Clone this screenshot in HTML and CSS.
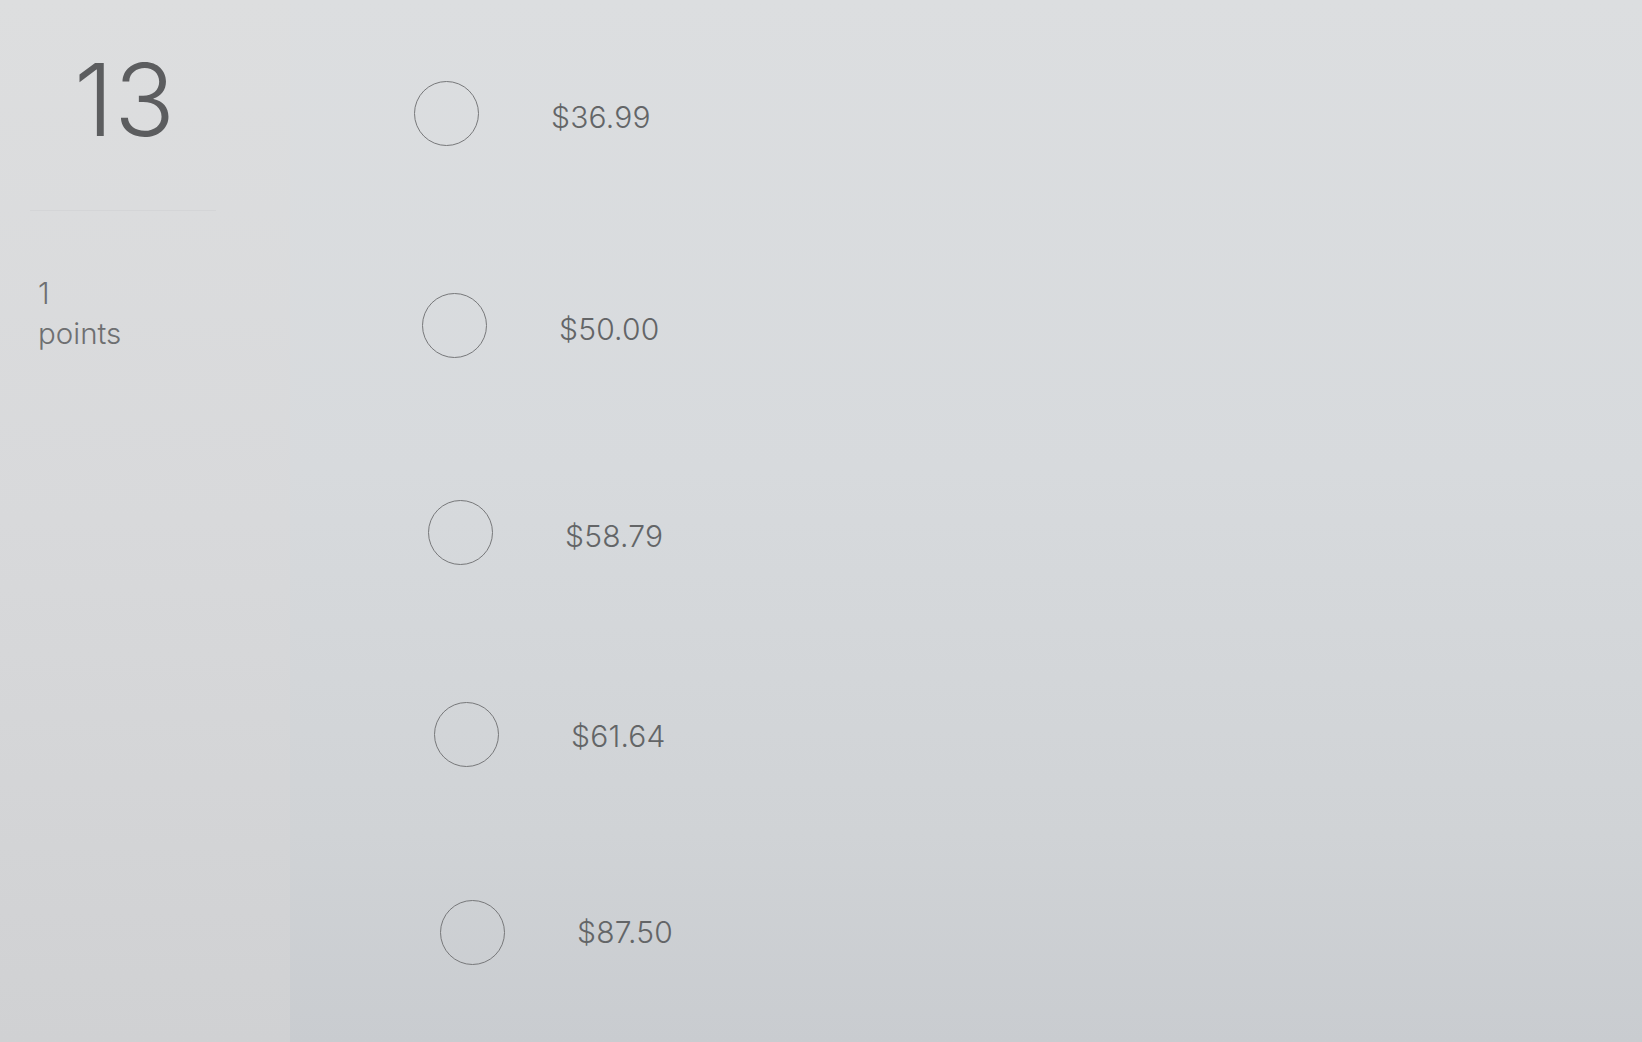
FILE: index.html
```html
<!DOCTYPE html>
<html>
<head>
<meta charset="utf-8">
<link rel="stylesheet" href="styles.css">
</head>
<body>
<div class="page">
  <aside class="side">
    <div class="qnum">13</div>
    <div class="pts"><span class="pts-n">1</span><span class="pts-l">points</span></div>
  </aside>
  <main class="opts">
    <div class="opt o1"><span class="radio"></span><span class="val">$36.99</span></div>
    <div class="opt o2"><span class="radio"></span><span class="val">$50.00</span></div>
    <div class="opt o3"><span class="radio"></span><span class="val">$58.79</span></div>
    <div class="opt o4"><span class="radio"></span><span class="val">$61.64</span></div>
    <div class="opt o5"><span class="radio"></span><span class="val">$87.50</span></div>
  </main>
</div>
</body>
</html>
```
FILE: styles.css
```css
html, body {
  margin: 0;
  padding: 0;
}
body {
  font-family: Inter, Lato, sans-serif;
  background: #d6d9dc;
}
.page {
  display: flex;
  width: 1642px;
  height: 1042px;
  overflow: hidden;
  background: linear-gradient(180deg, #dcdee0 0%, #d7dadd 45%, #d0d3d6 80%, #c9ccd0 100%);
}
.side {
  width: 290px;
  flex: none;
  display: flex;
  flex-direction: column;
  background: linear-gradient(180deg, #dddedf 0%, #d8d9db 50%, #d0d1d3 100%);
}
.qnum {
  margin: 50px 0 0 30px;
  padding-left: 44px;
  width: 186px;
  height: 161px;
  box-sizing: border-box;
  font-size: 100px;
  font-weight: 300;
  line-height: 1;
  letter-spacing: 1px;
  color: #5c5d5f;
  border-bottom: 1px solid #d4d5d7;
}
.pts {
  display: flex;
  flex-direction: column;
  margin: 62px 0 0 38px;
  color: #6e6f71;
  font-size: 29.5px;
  font-weight: 300;
  line-height: 40px;
}
.opts {
  flex: 1;
  display: flex;
  flex-direction: column;
  padding-top: 6px;
  padding-left: 124px;
}
.opt {
  display: flex;
  align-items: center;
  gap: 72px;
}
.o1 { height: 214px; }
.o2 { margin-left: 8px; height: 210px; }
.o3 { margin-left: 14px; height: 204px; }
.o4 { margin-left: 20px; height: 200px; }
.o5 { margin-left: 26px; height: 196px; }
.radio {
  width: 65px;
  height: 65px;
  box-sizing: border-box;
  border: 1.6px solid #77787a;
  border-radius: 50%;
  flex: none;
}
.val {
  padding-top: 7px;
  font-size: 30px;
  font-weight: 300;
  color: #636567;
  letter-spacing: 0.2px;
}
.o4 .val { padding-top: 4px; }
.o5 .val { padding-top: 0; }
```
